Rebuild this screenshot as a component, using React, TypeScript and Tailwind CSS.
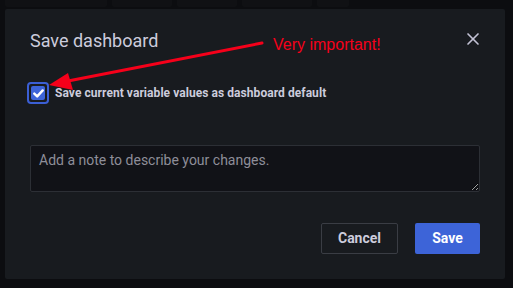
import { X } from "lucide-react";

// faint dashboard panels peeking out behind the modal overlay
const panels = [
  { w: "w-[102px]" },
  { w: "w-[60px]" },
  { w: "w-[60px]" },
  { w: "w-[70px]" },
  { w: "w-[32px]" },
];

function Checkbox() {
  return (
    <div className="flex h-[22px] w-[22px] items-center justify-center rounded-[4px] border-2 border-[#3b5fd4]">
      <div className="flex h-[14px] w-[14px] items-center justify-center rounded-[2px] bg-[#3d64d8]">
        <svg width="11" height="9" viewBox="0 0 11 9" fill="none">
          <path d="M1.3 4.6 L4.2 7.4 L9.7 1.4" stroke="white" strokeWidth="2.4" strokeLinecap="round" strokeLinejoin="round" />
        </svg>
      </div>
    </div>
  );
}

export default function App() {
  return (
    <div className="relative h-[288px] w-[513px] overflow-hidden bg-[#0c0d10] px-[5px] font-['Roboto','Inter',sans-serif]">
      {/* Background panels */}
      <div className="flex h-[7px] gap-[5px]">
        {panels.map((p, i) => (
          <div key={i} className={`${p.w} h-full rounded-b-[2px] bg-[#101114]`} />
        ))}
      </div>

      {/* Modal */}
      <div className="mt-[2px] flex h-[270px] w-[500px] flex-col rounded-[2px] bg-[#181b1f] px-[25px]">
        <div className="flex h-[64px] items-center justify-between">
          <h2 className="text-[18px] leading-none text-[#ccccdc]">Save dashboard</h2>
          <X className="-mr-[3px] -mt-[5px] h-[20px] w-[20px] text-[#c2c2d4]" strokeWidth={2} />
        </div>

        <div className="mt-[9px] flex h-[22px] items-center gap-[6px] -ml-[3px]">
          <Checkbox />
          <span className="text-[12px] font-bold tracking-[0.005em] text-[#ccccdc]">
            Save current variable values as dashboard default
          </span>
        </div>

        <textarea
          className="mt-[41px] h-[47px] w-full resize-y rounded-[2px] border border-[#2c2f35] bg-[#111217] px-[8px] py-[4px] text-[14px] text-[#ccccdc] placeholder:text-[#8e8e99] outline-none"
          placeholder="Add a note to describe your changes."
        />

        <div className="mt-[31px] flex justify-end gap-[17px]">
          <button
            type="button"
            className="h-[31px] w-[77px] rounded-[2px] border border-[#3a3d44] text-[14px] font-bold text-[#ccccdc]"
          >
            Cancel
          </button>
          <button
            type="button"
            className="h-[31px] w-[65px] rounded-[2px] bg-[#3d64d8] text-[14px] font-bold text-white"
          >
            Save
          </button>
        </div>
      </div>

      {/* Red annotation */}
      <svg className="pointer-events-none absolute left-0 top-0" width="513" height="288" viewBox="0 0 513 288">
        <line x1="262" y1="43" x2="68" y2="81" stroke="#f5001a" strokeWidth="3" strokeLinecap="round" />
        <polygon points="49,85 68,73 73,90" fill="#f5001a" />
      </svg>
      <span className="pointer-events-none absolute left-[273px] top-[37px] font-['Liberation_Sans',sans-serif] text-[16px] leading-none text-[#f5001a]">
        Very important!
      </span>
    </div>
  );
}
